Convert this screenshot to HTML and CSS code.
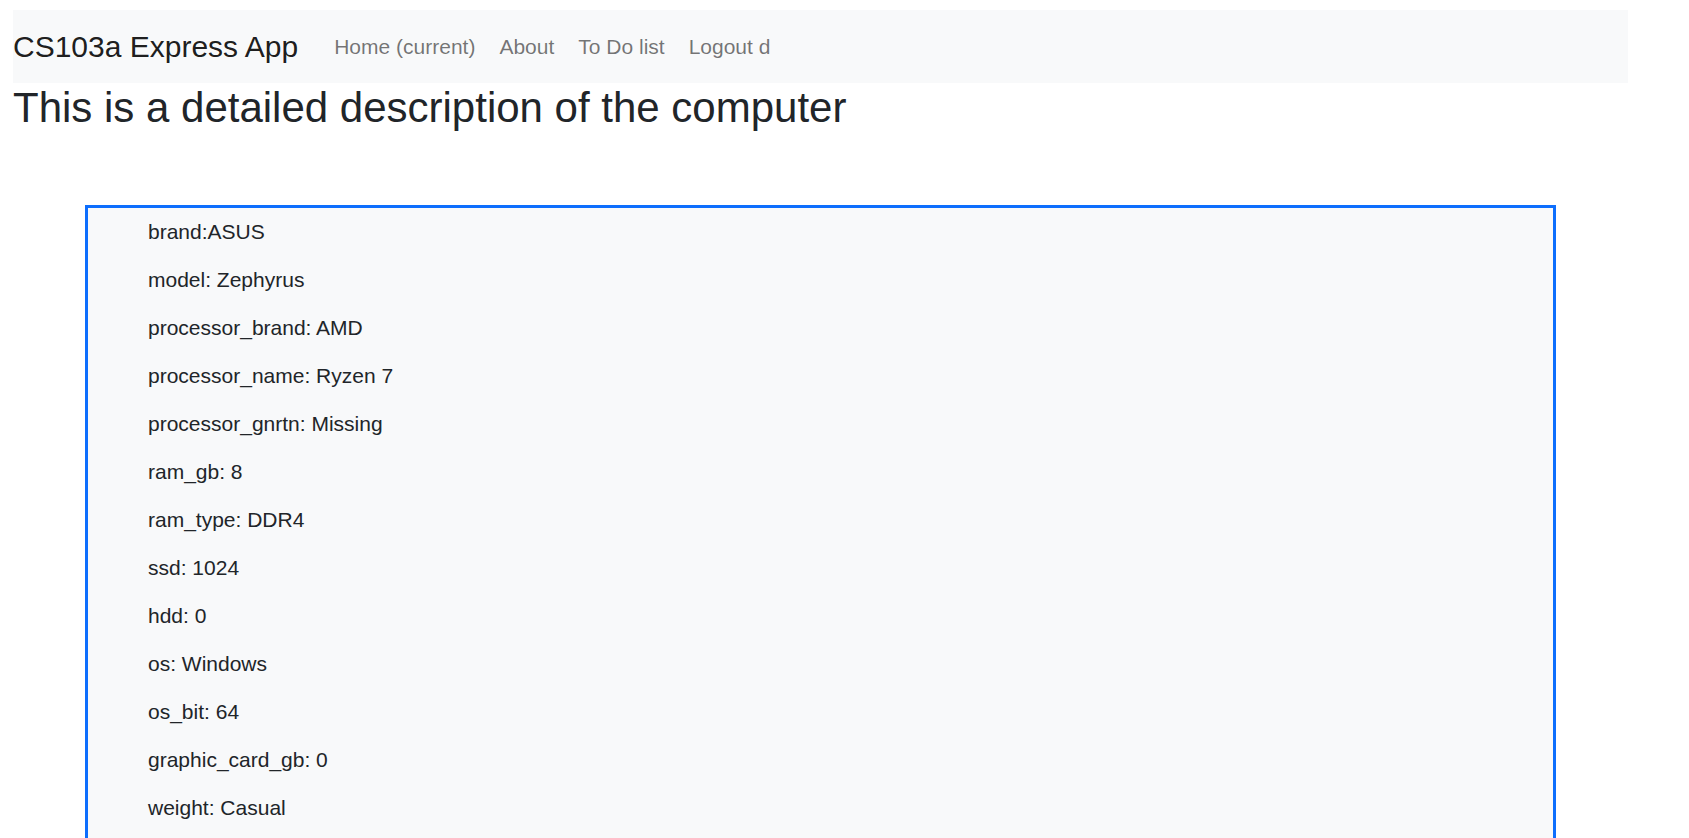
FILE: index.html
```html
<!DOCTYPE html>
<html lang="en">
<head>
<meta charset="utf-8">
<title>CS103a Express App</title>
<link rel="stylesheet" href="styles.css">
</head>
<body>
<nav class="navbar">
  <a class="brand" href="#">CS103a Express App</a>
  <ul class="nav-links">
    <li><a class="nav-link" href="#">Home (current)</a></li>
    <li><a class="nav-link" href="#">About</a></li>
    <li><a class="nav-link" href="#">To Do list</a></li>
    <li><a class="nav-link" href="#">Logout d</a></li>
  </ul>
</nav>
<h1 class="title">This is a detailed description of the computer</h1>
<main class="content">
  <ul class="specs">
    <li>brand:ASUS</li>
    <li>model: Zephyrus</li>
    <li>processor_brand: AMD</li>
    <li>processor_name: Ryzen 7</li>
    <li>processor_gnrtn: Missing</li>
    <li>ram_gb: 8</li>
    <li>ram_type: DDR4</li>
    <li>ssd: 1024</li>
    <li>hdd: 0</li>
    <li>os: Windows</li>
    <li>os_bit: 64</li>
    <li>graphic_card_gb: 0</li>
    <li>weight: Casual</li>
  </ul>
</main>
</body>
</html>
```
FILE: styles.css
```css
html {
  overflow: hidden;
}

body {
  margin: 10px 0 0 13px;
  font-family: "Liberation Sans", Arial, sans-serif;
  font-size: 21px;
  line-height: 1.5;
  color: #212529;
  background: #fff;
}

.navbar {
  width: 1615px;
  box-sizing: border-box;
  display: flex;
  align-items: center;
  padding: 9px 0;
  background: #f8f9fa;
}

.brand {
  font-size: 30px;
  line-height: 45px;
  padding: 5px 0;
  margin-right: 24px;
  color: rgba(0, 0, 0, 0.9);
  text-decoration: none;
}

.nav-links {
  display: flex;
  list-style: none;
  margin: 0;
  padding: 0;
}

.nav-link {
  display: block;
  padding: 8px 12px;
  line-height: 31px;
  color: rgba(0, 0, 0, 0.55);
  text-decoration: none;
}

.title {
  margin: 0;
  font-size: 42px;
  font-weight: 400;
  line-height: 1.2;
}

.content {
  padding: 72px 0 0 72px;
  width: 1471px;
}

.specs {
  list-style: none;
  margin: 0;
  padding: 8px 0 60px 60px;
  border: 3px solid #0d6efd;
  background: #f8f9fa;
}

.specs li {
  line-height: 31px;
  margin-bottom: 17px;
}
```
